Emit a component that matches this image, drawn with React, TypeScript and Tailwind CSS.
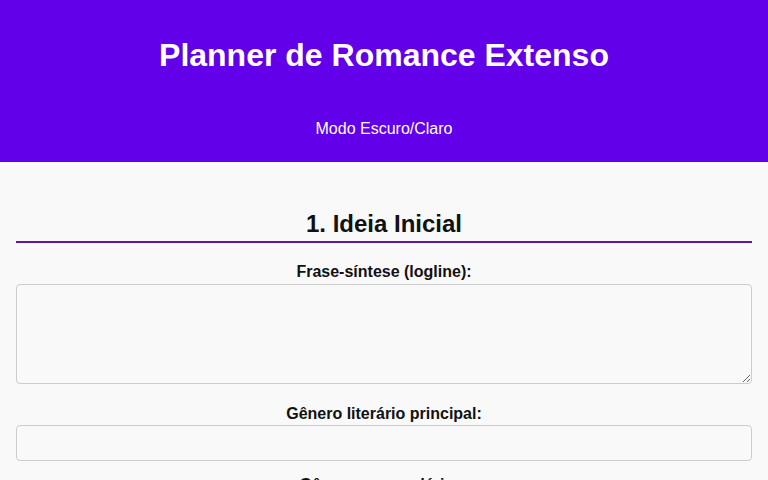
export default function App() {
  const font = { fontFamily: '"Liberation Sans", Arial, sans-serif' };
  return (
    <div style={font} className="min-h-[480px] bg-[#f9f9f9] text-[#111]">
      <header className="bg-[#6200ea] text-white flex flex-col items-center pt-[37px] pb-[14px]">
        <h1 className="text-[32px] leading-[37px] font-bold m-0">Planner de Romance Extenso</h1>
        <button className="mt-[36px] py-[10px] px-5 text-[16px] leading-[18px] text-white bg-transparent border-0">
          Modo Escuro/Claro
        </button>
      </header>
      <main className="px-4 pt-[48px]">
        <section className="flex flex-col">
          <h2 className="text-[24px] leading-[28px] font-bold text-center pb-[3px] border-b-2 border-[#5a16ad]">
            1. Ideia Inicial
          </h2>
          <label className="mt-[19px] pt-[1px] text-[16px] leading-[18px] font-bold text-center">
            Frase-síntese (logline):
          </label>
          <textarea className="mt-[3px] block h-[100px] w-full border border-[#ccc] rounded-[4px] bg-[#f9f9f9] resize-y" />
          <label className="mt-[19px] pt-[2px] text-[16px] leading-[18px] font-bold text-center">
            Gênero literário principal:
          </label>
          <input className="mt-[2px] block h-[36px] w-full border border-[#ccc] rounded-[4px] bg-[#f9f9f9]" />
          <label className="mt-[13px] pt-[2px] text-[16px] leading-[18px] font-bold text-center">
            Gêneros secundários:
          </label>
          <input className="mt-[2px] block h-[36px] w-full border border-[#ccc] rounded-[4px] bg-[#f9f9f9]" />
        </section>
      </main>
    </div>
  );
}
